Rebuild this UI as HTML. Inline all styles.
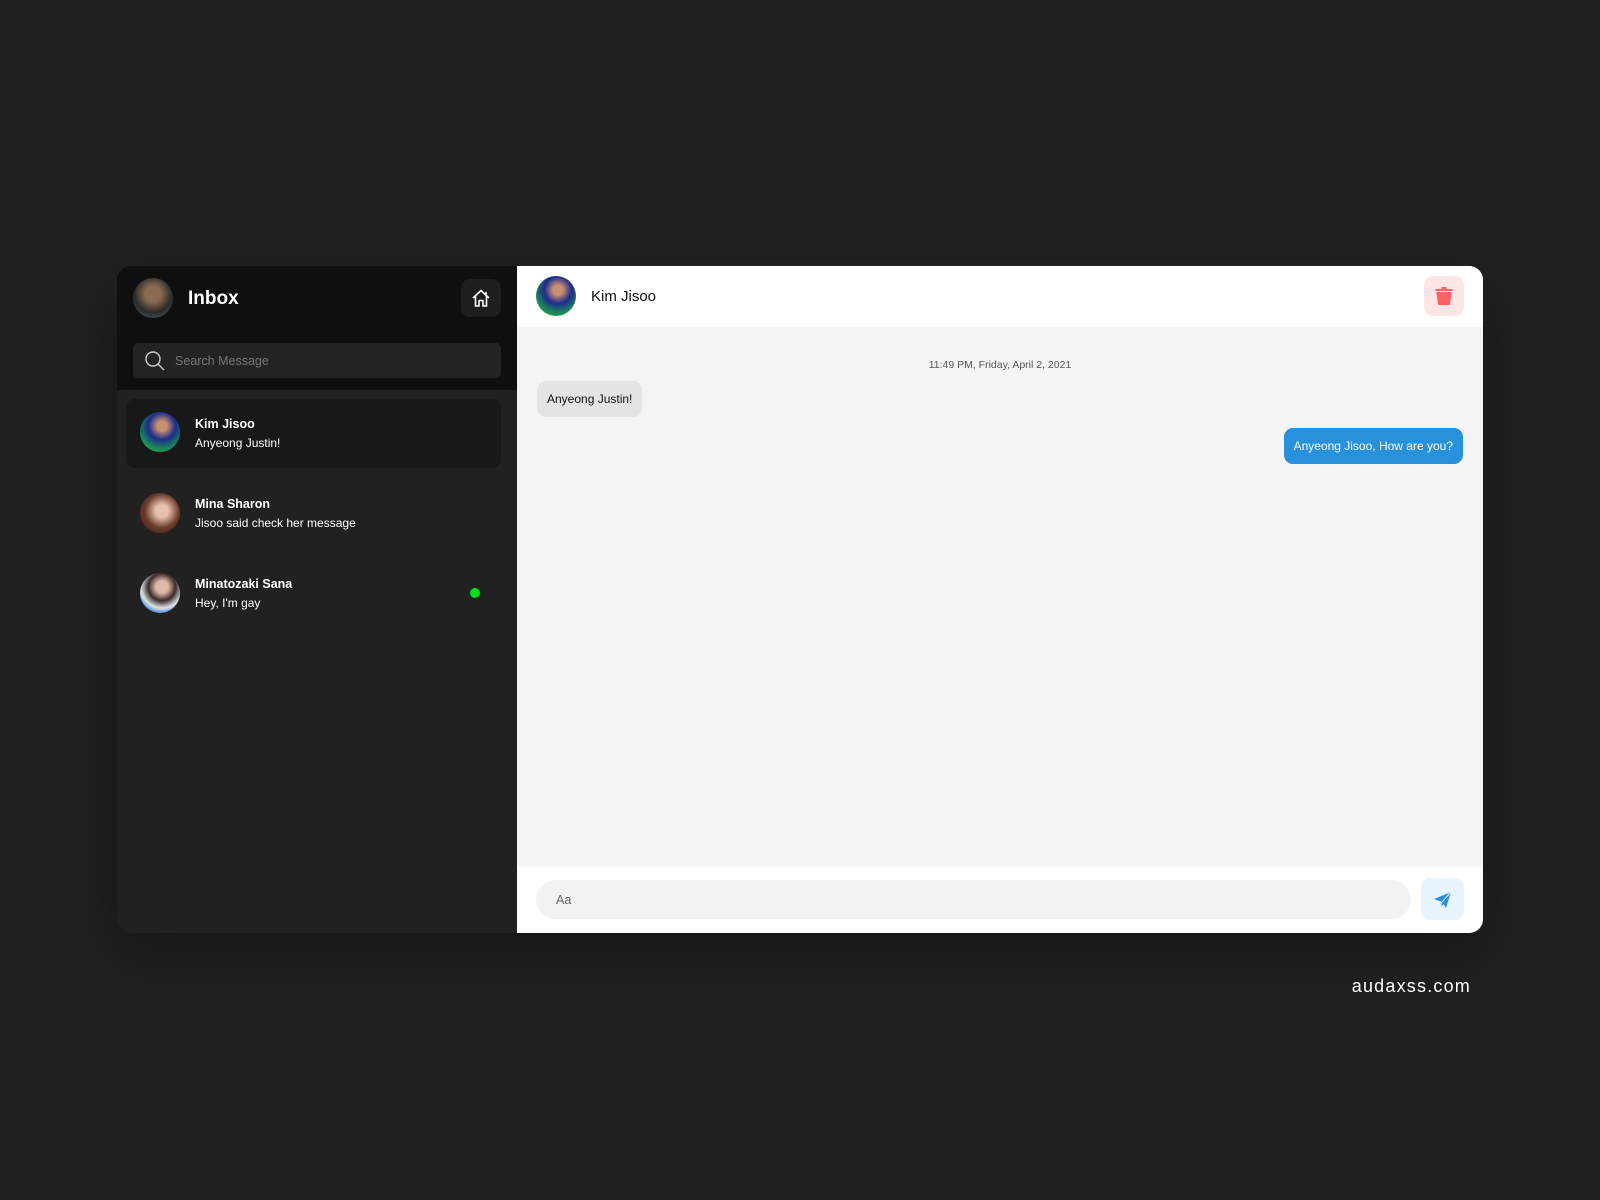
<!DOCTYPE html>
<html><head><meta charset="utf-8"><style>
*{margin:0;padding:0;box-sizing:border-box}
body{width:1600px;height:1200px;background:#212121;font-family:"Liberation Sans",sans-serif;position:relative;overflow:hidden}
.card{position:absolute;left:117px;top:266px;width:1366px;height:667px;border-radius:14px;overflow:hidden;box-shadow:0 20px 60px rgba(0,0,0,.35)}
.side{position:absolute;left:0;top:0;width:400px;height:667px;background:#212121}
.shead{position:absolute;left:0;top:0;width:400px;height:124px;background:#0f0f0f}
.av{position:absolute;border-radius:50%}
.abs{position:absolute}
.main{position:absolute;left:400px;top:0;width:966px;height:667px;background:#f4f4f4}
</style></head><body>
<div class="card">
 <div class="side">
  <div class="shead">
   <div class="av" style="left:16px;top:12px;width:40px;height:40px;background:radial-gradient(circle at 50% 40%,#8a6a50 0 25%,#2a2a2a 60%,#5b6e80)"></div>
   <div class="abs" style="left:71px;top:22px;color:#fff;font-weight:bold;font-size:19px">Inbox</div>
   <div class="abs" style="left:344px;top:13px;width:40px;height:38px;border-radius:9px;background:#1e1e1e">
    <svg width="40" height="38" viewBox="0 0 40 38"><path d="M12 19 L20 11.5 L28 19 M14.5 17 V27 H18 V21.5 H22 V27 H25.5 V17 M25 13 V15.5" fill="none" stroke="#fff" stroke-width="1.6" stroke-linejoin="round"/></svg>
   </div>
   <div class="abs" style="left:16px;top:77px;width:368px;height:35px;border-radius:5px;background:#232323">
    <svg class="abs" style="left:11px;top:7px" width="22" height="22" viewBox="0 0 22 22"><circle cx="9" cy="9" r="7" fill="none" stroke="#ccc" stroke-width="1.4"/><path d="M14 14 L20 20" stroke="#ccc" stroke-width="1.4"/></svg>
    <div class="abs" style="left:42px;top:11px;color:#777;font-size:12.5px">Search Message</div>
   </div>
  </div>
  <div class="abs" style="left:9px;top:133px;width:375px;height:69px;border-radius:9px;background:#181818"></div>
  <div class="av" style="left:23px;top:146px;width:40px;height:40px;background:radial-gradient(circle at 55% 35%,#c99070 0 14%,#1d2c8a 40%,#1aa050 75%)"></div>
  <div class="abs" style="left:78px;top:151px;color:#fff;font-weight:bold;font-size:12.5px">Kim Jisoo</div>
  <div class="abs" style="left:78px;top:170px;color:#fff;font-size:12px">Anyeong Justin!</div>
  <div class="av" style="left:23px;top:227px;width:40px;height:40px;background:radial-gradient(circle at 55% 45%,#e8c0b0 0 20%,#6a3a28 55%,#3a2018)"></div>
  <div class="abs" style="left:78px;top:231px;color:#fff;font-weight:bold;font-size:12.5px">Mina Sharon</div>
  <div class="abs" style="left:78px;top:250px;color:#fff;font-size:12px">Jisoo said check her message</div>
  <div class="av" style="left:23px;top:307px;width:40px;height:40px;background:radial-gradient(circle at 55% 35%,#e0b8a8 0 18%,#3a2a28 40%,#dfe3e6 62%,#2a7ad8 80%)"></div>
  <div class="abs" style="left:78px;top:311px;color:#fff;font-weight:bold;font-size:12.5px">Minatozaki Sana</div>
  <div class="abs" style="left:78px;top:330px;color:#fff;font-size:12px">Hey, I'm gay</div>
  <div class="av" style="left:353px;top:322px;width:10px;height:10px;background:#00e01a"></div>
 </div>
 <div class="main">
  <div class="abs" style="left:0;top:0;width:966px;height:61px;background:#fff">
   <div class="av" style="left:19px;top:10px;width:40px;height:40px;background:radial-gradient(circle at 55% 35%,#c99070 0 14%,#1d2c8a 40%,#1aa050 75%)"></div>
   <div class="abs" style="left:74px;top:22px;font-size:15px;color:#111">Kim Jisoo</div>
   <div class="abs" style="left:907px;top:10px;width:40px;height:40px;border-radius:9px;background:#ffe6e6">
    <svg width="40" height="40" viewBox="0 0 40 40"><rect x="11.5" y="13" width="17" height="2" fill="#ff6262"/><rect x="17.5" y="11" width="5" height="2" fill="#ff6262"/><path d="M12.5 16 H27.5 L26 29 H14 Z" fill="#ff6262"/></svg>
   </div>
  </div>
  <div class="abs" style="left:0;top:93px;width:966px;text-align:center;font-size:10.5px;color:#555">11:49 PM, Friday, April 2, 2021</div>
  <div class="abs" style="left:20px;top:115px;height:36px;padding:0 10px;border-radius:9px;background:#e4e4e4;font-size:12px;line-height:37px;color:#111">Anyeong Justin!</div>
  <div class="abs" style="right:20px;top:162px;height:36px;padding:0 10px;border-radius:9px;background:#2792db;font-size:12px;line-height:37px;color:#fff">Anyeong Jisoo, How are you?</div>
  <div class="abs" style="left:0;top:600px;width:966px;height:67px;background:#fff">
   <div class="abs" style="left:19px;top:14px;width:875px;height:39px;border-radius:20px;background:#f1f2f4;font-size:12.5px;color:#666;line-height:40px;padding-left:20px">Aa</div>
   <div class="abs" style="left:904px;top:12px;width:43px;height:42px;border-radius:9px;background:#e8f4fd">
    <svg width="43" height="42" viewBox="0 0 43 42"><path d="M13 21 L30 14 L25 30 L21 24 Z" fill="#2792db"/><path d="M21 24 L20 28 L23 26" fill="#2792db"/><path d="M21 24 L30 14" stroke="#e8f4fd" stroke-width="1"/></svg>
   </div>
  </div>
 </div>
</div>
<div class="abs" style="right:129px;top:976px;color:#fff;font-size:18px;letter-spacing:1.2px">audaxss.com</div>
</body></html>
